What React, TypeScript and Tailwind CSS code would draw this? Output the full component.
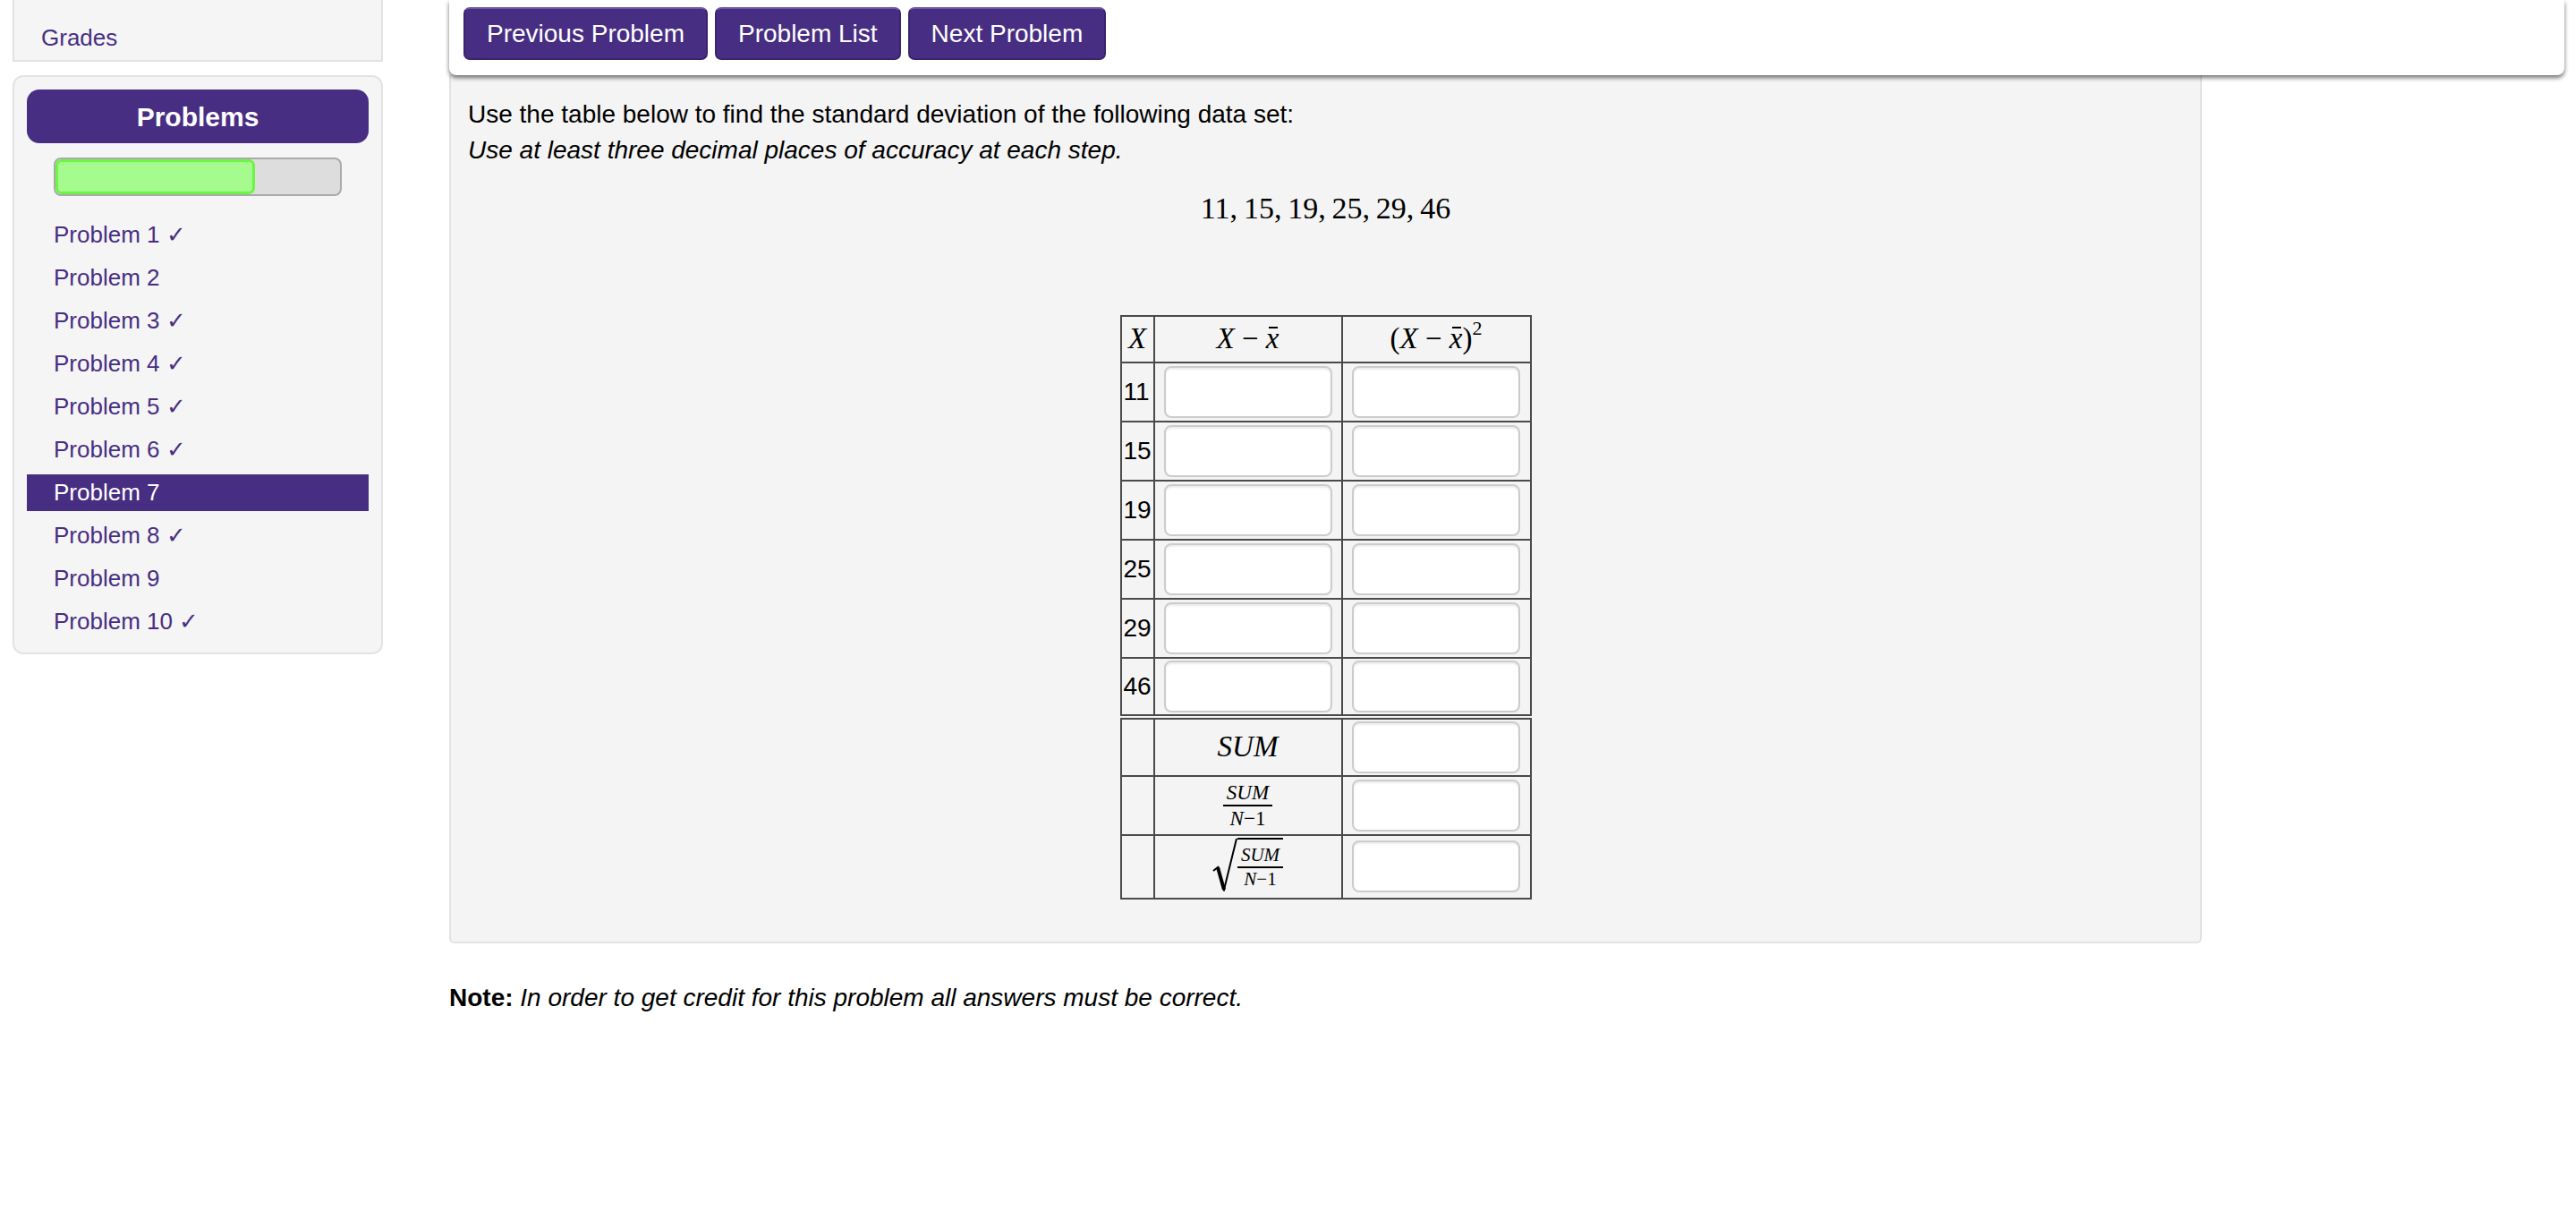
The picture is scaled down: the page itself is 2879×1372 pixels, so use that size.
import React from 'react';

const problems = [
  { n: 1, done: true },
  { n: 2, done: false },
  { n: 3, done: true },
  { n: 4, done: true },
  { n: 5, done: true },
  { n: 6, done: true },
  { n: 7, done: false, active: true },
  { n: 8, done: true },
  { n: 9, done: false },
  { n: 10, done: true },
];

const values = [11, 15, 19, 25, 29, 46];

function XBar() {
  return (
    <span className="relative inline-block italic">
      x
      <span className="absolute left-[3px] right-[1px] top-[11px] h-[2px] bg-black"></span>
    </span>
  );
}

function Frac({ small }: { small?: boolean }) {
  return (
    <span className={`inline-flex flex-col items-center leading-none ${small ? 'text-[21px]' : 'text-[23px]'}`}>
      <span className="px-[4px] pb-[2px] italic">SUM</span>
      <span className="w-full border-t-2 border-black px-[4px] pt-[2px]">
        <span className="italic">N</span>−1
      </span>
    </span>
  );
}

function AnswerBox() {
  return (
    <input
      type="text"
      className="mx-auto block h-[58px] w-[188px] rounded-[8px] border-2 border-[#cccccc] bg-white shadow-[inset_0_2px_2px_rgba(0,0,0,0.08)] outline-none"
    />
  );
}

export default function App() {
  const cell = 'border-2 border-[#4a4a4a] p-0';
  const split = 'border-t-[6px] border-double border-x-2 border-b-2 border-[#4a4a4a] p-0';

  return (
    <div className="flex min-h-[1372px] w-full overflow-hidden bg-white font-['Liberation_Sans',Arial,sans-serif] text-black">
      {/* Sidebar */}
      <div className="ml-[14px] flex w-[414px] shrink-0 flex-col">
        <div className="-mt-[44px] border-2 border-[#e3e3e3] bg-[#f5f5f5] pt-[8px] pb-[1px] text-[26px] text-[#472e83]">
          <div className="h-[52px] pl-[30px] leading-[40px]">User Settings</div>
          <div className="h-[48px] pl-[30px] leading-[48px]">Grades</div>
        </div>

        <div className="mt-[15px] rounded-[12px] border-2 border-[#e3e3e3] bg-[#f5f5f5] p-[14px] pb-[14px]">
          <div className="flex h-[60px] items-center justify-center rounded-[14px] bg-[#472e83] text-[30px] font-bold text-white">
            Problems
          </div>

          <div className="mx-[30px] mt-[16px] h-[43px] rounded-[8px] border-2 border-[#aaaaaa] bg-[#dddddd] p-0">
            <div className="h-full w-[70%] rounded-[7px] border-[3px] border-[#6cf542] bg-[#a6fb8f]"></div>
          </div>

          <div className="mt-[23px] flex flex-col gap-[7px] text-[26px]">
            {problems.map((p) => (
              <div
                key={p.n}
                className={`h-[41px] pl-[30px] leading-[41px] ${p.active ? 'bg-[#472e83] text-white' : 'text-[#472e83]'}`}
              >
                Problem {p.n}
                {p.done ? ' ✓' : ''}
              </div>
            ))}
          </div>
        </div>
      </div>

      {/* Main column */}
      <div className="ml-[74px] flex w-[2364px] shrink-0 flex-col">
        <div className="relative z-10 flex h-[84px] gap-[8px] rounded-b-[8px] bg-white pt-[8px] pl-[16px] shadow-[0_3px_5px_rgba(0,0,0,0.55)]">
          {['Previous Problem', 'Problem List', 'Next Problem'].map((label) => (
            <button
              key={label}
              className="h-[59px] rounded-[7px] border-2 border-[#3a2470] border-t-[#6a58a3] bg-[#472e83] px-[24px] text-[28px] text-white"
            >
              {label}
            </button>
          ))}
        </div>

        <div className="w-[1959px] rounded-b-[6px] border-2 border-t-0 border-[#e2e2e2] bg-[#f4f4f4] px-[19px] pt-[24px] pb-[47px]">
          <div className="text-[28px] leading-[40px]">
            Use the table below to find the standard deviation of the following data set:
          </div>
          <div className="text-[28px] italic leading-[40px]">
            Use at least three decimal places of accuracy at each step.
          </div>

          <div className="mt-[26px] text-center font-['Liberation_Serif',serif] text-[34px] leading-[38px]">
            11,&thinsp;15,&thinsp;19,&thinsp;25,&thinsp;29,&thinsp;46
          </div>

          <table className="mx-auto mt-[100px] border-collapse">
            <thead>
              <tr className="h-[49px] font-['Liberation_Serif',serif] text-[33px] font-normal">
                <th className={`${cell} w-[37px] font-normal italic`}>X</th>
                <th className={`${cell} w-[210px] font-normal`}>
                  <span className="italic">X</span>&nbsp;−&nbsp;<XBar />
                </th>
                <th className={`${cell} w-[211px] font-normal`}>
                  (<span className="italic">X</span>&nbsp;−&nbsp;<XBar />)
                  <sup className="relative -top-[15px] text-[22px]">2</sup>
                </th>
              </tr>
            </thead>
            <tbody>
              {values.map((v) => (
                <tr key={v} className="h-[66px]">
                  <td className={`${cell} pl-[2px] text-left text-[28px]`}>{v}</td>
                  <td className={cell}>
                    <AnswerBox />
                  </td>
                  <td className={cell}>
                    <AnswerBox />
                  </td>
                </tr>
              ))}
            </tbody>
            <tbody className="font-['Liberation_Serif',serif]">
              <tr className="h-[66px]">
                <td className={split}></td>
                <td className={`${split} text-center text-[33px] italic`}>SUM</td>
                <td className={split}>
                  <AnswerBox />
                </td>
              </tr>
              <tr className="h-[66px]">
                <td className={cell}></td>
                <td className={`${cell} text-center`}>
                  <Frac />
                </td>
                <td className={cell}>
                  <AnswerBox />
                </td>
              </tr>
              <tr className="h-[71px]">
                <td className={cell}></td>
                <td className={`${cell} text-center`}>
                  <span className="inline-flex items-start">
                    <svg width="28" height="60" viewBox="0 0 28 60" className="mt-[2px]">
                      <path d="M1 37 L6 33 L13 58 L27 1" fill="none" stroke="black" strokeWidth="2" />
                      <path d="M6 33 L13 58" fill="none" stroke="black" strokeWidth="4" />
                    </svg>
                    <span className="mt-[2px] border-t-2 border-black pt-[7px]">
                      <Frac small />
                    </span>
                  </span>
                </td>
                <td className={cell}>
                  <AnswerBox />
                </td>
              </tr>
            </tbody>
          </table>
        </div>

        <div className="mt-[41px] text-[28px] leading-[40px]">
          <span className="font-bold">Note:</span>{' '}
          <span className="italic">In order to get credit for this problem all answers must be correct.</span>
        </div>
      </div>
    </div>
  );
}
